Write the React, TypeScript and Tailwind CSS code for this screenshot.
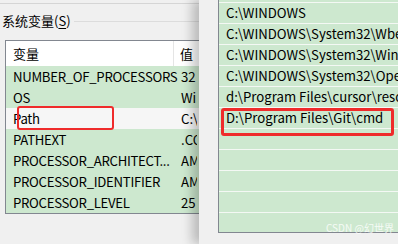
import React from "react";

const font = { fontFamily: '"Noto Sans CJK SC", "Noto Sans", sans-serif' };

const leftRows: [string, string][] = [
  ["NUMBER_OF_PROCESSORS", "32"],
  ["OS", "Windows_NT"],
  ["Path", "C:\\WINDOWS\\system32"],
  ["PATHEXT", ".COM;.EXE;.BAT"],
  ["PROCESSOR_ARCHITECT...", "AMD64"],
  ["PROCESSOR_IDENTIFIER", "AMD64 Family 25"],
  ["PROCESSOR_LEVEL", "25"],
];

const rightRows = [
  "C:\\Program Files\\",
  "C:\\WINDOWS",
  "C:\\WINDOWS\\System32\\Wbem",
  "C:\\WINDOWS\\System32\\WindowsPowerShell\\v1.0\\",
  "C:\\WINDOWS\\System32\\OpenSSH\\",
  "d:\\Program Files\\cursor\\resources\\app\\bin",
  "D:\\Program Files\\Git\\cmd",
  "",
  "",
  "",
  "",
  "",
];

export default function App() {
  return (
    <div
      className="relative w-[398px] h-[244px] overflow-hidden bg-[#f0f0f0] text-[#000000]"
      style={font}
    >
      {/* Left window */}
      <div className="absolute left-0 top-0 w-[199px] h-[244px] overflow-hidden bg-[#f0f0f0] flex flex-col">
        <div className="h-[4px] border-b border-[#d5d5d5] shrink-0" />
        <div className="mt-[9px] flex items-center h-[16px] shrink-0">
          <span className="pl-[2px] text-[13px] leading-[16px] whitespace-nowrap">
            系统变量(<span className="underline underline-offset-2">S</span>)
          </span>
          <div className="ml-[3px] flex-1 h-px bg-[#dcdcdc]" />
        </div>
        <div className="ml-[5px] mt-[11px] w-[260px] shrink-0 border border-[#828790] bg-white flex flex-col">
          <div className="h-[25px] flex bg-white text-[13px]">
            <div className="w-[168px] shrink-0 pl-[7px] flex items-center border-r border-[#e5e5e5]">变量</div>
            <div className="pl-[6px] flex items-center">值</div>
          </div>
          {leftRows.map(([k, v]) => (
            <div
              key={k}
              className={`h-[21px] flex text-[13.2px] whitespace-nowrap overflow-hidden ${
                k === "Path" ? "bg-[#f6f6f6]" : "bg-[#cde8cf]"
              }`}
            >
              <div className="w-[169px] shrink-0 pl-[7px] flex items-center tracking-[-0.3px]">{k}</div>
              <div className="w-[22px] shrink-0 overflow-hidden pl-[6px] flex items-center">{v}</div>
            </div>
          ))}
        </div>
        {/* red highlight on Path */}
        <div className="absolute left-[17px] top-[106px] w-[97px] h-[24px] border-2 border-[#ef2b2b] rounded-[3px]" />
      </div>

      {/* Right window */}
      <div className="absolute left-[199px] top-0 right-0 bottom-0 bg-[#f0f0f0] shadow-[-7px_0_10px_rgba(0,0,0,0.22)]">
        <div className="ml-[19px] mt-[-18px] h-[251px] border-l border-b border-[#828790] bg-[#cde8cf] overflow-hidden flex flex-col">
          {rightRows.map((r, i) => (
            <div
              key={i}
              className="h-[21px] shrink-0 border-b border-[#f4f8f4] pl-[7px] flex items-center text-[13.2px] whitespace-nowrap"
            >
              {r}
            </div>
          ))}
        </div>
        <div className="absolute left-[22px] top-[108px] w-[173px] h-[28px] border-[3px] border-[#ef2b2b] rounded-[3px]" />
      </div>

      {/* watermark */}
      <div className="absolute left-[326px] top-[222px] text-[10px] leading-[12px] text-white/80 whitespace-nowrap">
        CSDN @幻世界
      </div>
    </div>
  );
}
